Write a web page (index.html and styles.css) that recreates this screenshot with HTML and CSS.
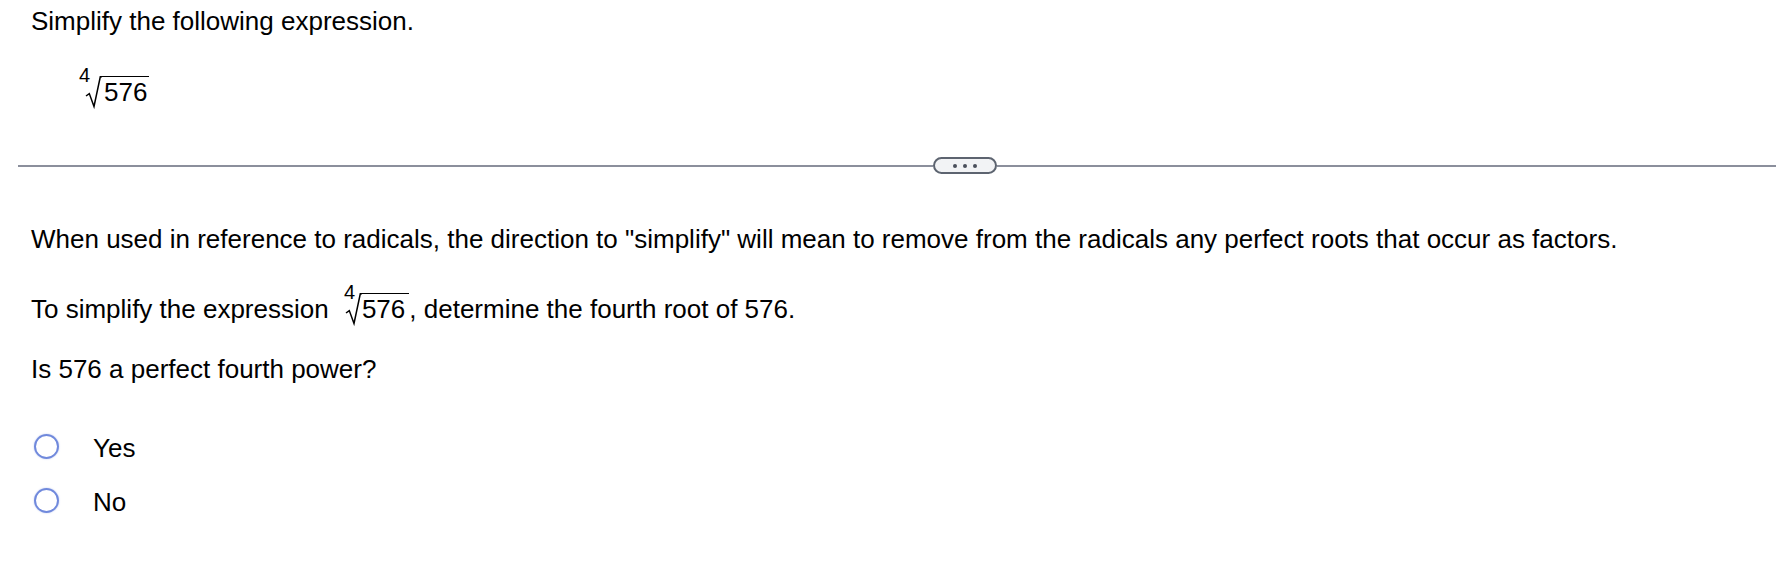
FILE: index.html
```html
<!DOCTYPE html>
<html>
<head>
<meta charset="utf-8">
<link rel="stylesheet" href="styles.css">
</head>
<body>
<div class="page">
  <p class="title">Simplify the following expression.</p>
  <div class="expr">
    <span class="rad blk"><span class="idx">4</span><svg class="rsign" viewBox="0 0 17 32" width="17" height="32"><path d="M1 20 L4.3 17.6 L9 30.5 L15.3 0.75 L17 0.75" fill="none" stroke="#000" stroke-width="1.5" stroke-linejoin="miter"/></svg><span class="radicand">576</span></span>
  </div>
  <div class="sep">
    <div class="sep-left"></div>
    <div class="pill"><span class="dot"></span><span class="dot"></span><span class="dot"></span></div>
    <div class="sep-right"></div>
  </div>
  <p class="text t1">When used in reference to radicals, the direction to "simplify" will mean to remove from the radicals any perfect roots that occur as factors.</p>
  <p class="text t2">To simplify the expression <span class="rad inl"><span class="idx">4</span><svg class="rsign" viewBox="0 0 17 32" width="17" height="32"><path d="M1 20 L4.3 17.6 L9 30.5 L15.3 0.75 L17 0.75" fill="none" stroke="#000" stroke-width="1.5" stroke-linejoin="miter"/></svg><span class="radicand">576</span></span>, determine the fourth root of 576.</p>
  <p class="text t3">Is 576 a perfect fourth power?</p>
  <div class="options">
    <label class="opt"><span class="radio"></span><span class="opt-label">Yes</span></label>
    <label class="opt"><span class="radio"></span><span class="opt-label">No</span></label>
  </div>
</div>
</body>
</html>
```

FILE: styles.css
```css
html, body {
  margin: 0;
  padding: 0;
  background: #fff;
}
body {
  font-family: "Liberation Sans", Arial, Helvetica, sans-serif;
  font-size: 26px;
  line-height: 30px;
  color: #000;
}
.page {
  padding-top: 6px;
}
p {
  margin: 0;
}
.title {
  padding-left: 31px;
}
.expr {
  margin-top: 39.8px;
  padding-left: 85px;
}
.rad {
  display: inline-block;
  position: relative;
  padding-left: 17px;
  vertical-align: baseline;
}
.rsign {
  position: absolute;
  left: 0;
  top: 0;
  overflow: visible;
}
.idx {
  position: absolute;
  left: -6px;
  top: -11px;
  font-size: 20px;
  line-height: 20px;
}
.radicand {
  display: inline-block;
  border-top: 1.5px solid #000;
  padding: 0 2px 0 2px;
  line-height: 30px;
}
.inl {
  margin-left: 9px;
  padding-left: 16px;
}
.inl .idx {
  left: -1px;
}
.inl .radicand {
  padding-right: 4px;
  padding-left: 1px;
}
.sep {
  margin-top: 50.7px;
  display: flex;
  align-items: center;
  height: 17px;
  padding-left: 18px;
}
.sep-left {
  width: 915px;
  height: 2px;
  background: #8b8f9c;
}
.sep-right {
  flex: 1;
  height: 2px;
  background: #8b8f9c;
}
.pill {
  box-sizing: border-box;
  width: 64px;
  height: 17px;
  border: 2px solid #5d6470;
  border-radius: 9px;
  background: #f2f3f5;
  display: flex;
  align-items: center;
  justify-content: center;
  gap: 6px;
}
.dot {
  width: 4px;
  height: 4px;
  border-radius: 50%;
  background: #4b505b;
}
.text {
  padding-left: 31px;
}
.t1 {
  margin-top: 50px;
}
.t2 {
  margin-top: 38.5px;
}
.t3 {
  margin-top: 30px;
}
.options {
  margin-top: 49px;
  display: flex;
  flex-direction: column;
  gap: 24px;
  padding-left: 34px;
}
.opt {
  display: flex;
  align-items: center;
  height: 30px;
}
.radio {
  box-sizing: border-box;
  width: 25px;
  height: 25px;
  border-radius: 50%;
  border: 2.5px solid #7089dc;
  box-shadow: 0 0 1.5px rgba(112, 137, 220, 0.6);
  margin-top: -3px;
}
.opt-label {
  margin-left: 34px;
}
```
